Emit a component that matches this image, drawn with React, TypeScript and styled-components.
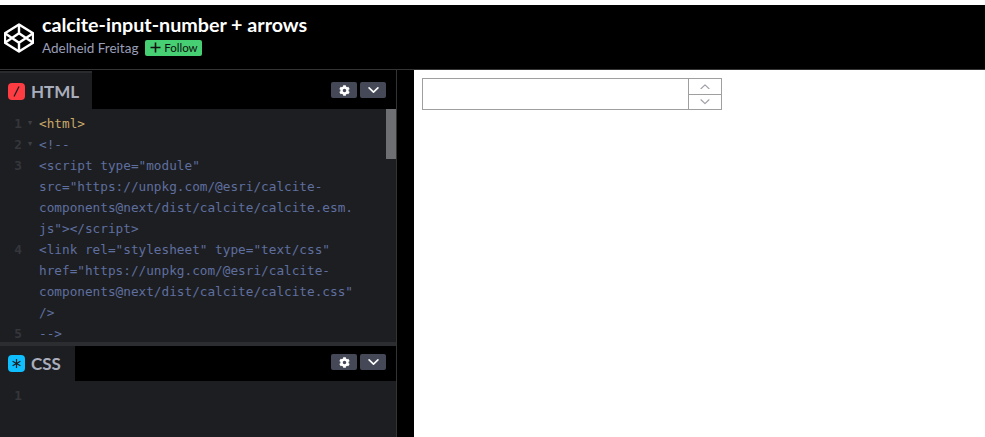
import styled, { createGlobalStyle } from "styled-components";
import { FaCog } from "react-icons/fa";

const GlobalStyle = createGlobalStyle`
  html, body {
    margin: 0;
    padding: 0;
    background: #fff;
  }
  * {
    box-sizing: border-box;
  }
`;

const Page = styled.div`
  width: 985px;
  height: 437px;
  padding-top: 5px;
  display: flex;
  flex-direction: column;
  overflow: hidden;
  font-family: Lato, "Liberation Sans", sans-serif;
`;

const Header = styled.header`
  height: 65px;
  flex: none;
  background: #000;
  border-bottom: 1px solid #343436;
  display: flex;
  align-items: center;
  padding: 0 0 5px 4px;
  gap: 8px;
`;

const Logo = styled.svg`
  width: 30px;
  height: 30px;
  margin-top: 6px;
  flex: none;
`;

const TitleBlock = styled.div`
  display: flex;
  flex-direction: column;
  gap: 4px;
`;

const Title = styled.h1`
  margin: 0;
  font-size: 19.7px;
  line-height: 22px;
  font-weight: 700;
  color: #fff;
`;

const Byline = styled.div`
  display: flex;
  align-items: center;
  gap: 7px;
  font-size: 13.5px;
  line-height: 16px;
  color: #9a9eb8;
`;

const FollowButton = styled.button`
  width: 57px;
  height: 16px;
  padding: 0;
  border: 0;
  border-radius: 2px;
  background: #47cf73;
  color: #111;
  font-family: inherit;
  font-size: 11.5px;
  display: flex;
  align-items: center;
  justify-content: center;
  gap: 3px;
`;

const Body = styled.main`
  flex: 1;
  display: flex;
  min-height: 0;
`;

const EditorColumn = styled.section`
  width: 397px;
  flex: none;
  display: flex;
  flex-direction: column;
  background: #000;
  border-right: 1px solid #343436;
`;

const Gutter = styled.div`
  width: 17px;
  flex: none;
  background: #000;
`;

const Preview = styled.section`
  flex: 1;
  background: #fff;
  padding: 8px;
`;

const Panel = styled.div<{ $height: number; $divider?: boolean }>`
  height: ${(p) => p.$height}px;
  flex: none;
  display: flex;
  flex-direction: column;
  position: relative;
  border-top: ${(p) => (p.$divider ? "4px solid #2c2d30" : "0")};
`;

const PanelBar = styled.div<{ $height: number }>`
  height: ${(p) => p.$height}px;
  flex: none;
  display: flex;
  align-items: stretch;
  justify-content: space-between;
  background: #000;
`;

const Tab = styled.div<{ $width: number; $topGap?: boolean }>`
  width: ${(p) => p.$width}px;
  margin-top: ${(p) => (p.$topGap ? "1px" : "0")};
  background: #1d1e22;
  border-top: ${(p) => (p.$topGap ? "2px solid #2a2b2f" : "0")};
  display: flex;
  align-items: center;
  gap: 6px;
  padding-left: 8px;
  font-size: 17px;
  font-weight: 700;
  color: #aaaebc;
`;

const TabIcon = styled.span<{ $color: string }>`
  width: 17px;
  height: 17px;
  border-radius: 4px;
  background: ${(p) => p.$color};
  display: flex;
  align-items: center;
  justify-content: center;
  color: #1d1e22;
  flex: none;
`;

const BarButtons = styled.div<{ $top: number }>`
  display: flex;
  align-items: flex-start;
  gap: 3px;
  padding: ${(p) => p.$top}px 10px 0 0;
`;

const BarButton = styled.button`
  width: 26px;
  height: 16px;
  padding: 0;
  border: 0;
  border-radius: 2px;
  background: #444857;
  color: #fff;
  display: flex;
  align-items: center;
  justify-content: center;
`;

const Code = styled.div`
  flex: 1;
  min-height: 0;
  overflow: hidden;
  background: #1d1e22;
  padding-top: 4px;
  font-family: "DejaVu Sans Mono", "Liberation Mono", monospace;
  font-size: 12.72px;
  line-height: 21px;
`;

const Line = styled.div`
  display: flex;
  height: 21px;
  white-space: pre;
`;

const LineNo = styled.span`
  width: 22px;
  flex: none;
  text-align: right;
  font-weight: 700;
  color: #34363b;
`;

const Fold = styled.span`
  width: 18px;
  flex: none;
  padding-left: 6px;
  font-size: 7px;
  color: #3d3f45;
`;

const Comment = styled.span`
  color: #5f6f9f;
  margin-left: -1px;
`;

const Tag = styled.span`
  color: #c9a968;
  margin-left: -1px;
`;

const Scrollbar = styled.div`
  position: absolute;
  top: 39px;
  right: 0;
  width: 10px;
  height: 50px;
  background: #6e6f72;
`;

const NumberInput = styled.div`
  width: 300px;
  height: 32px;
  border: 1px solid #9f9f9f;
  display: flex;
`;

const InputField = styled.input`
  flex: 1;
  min-width: 0;
  border: 0;
  outline: 0;
  background: #fff;
`;

const Steppers = styled.div`
  width: 33px;
  flex: none;
  border-left: 1px solid #9f9f9f;
  display: flex;
  flex-direction: column;
`;

const Stepper = styled.div<{ $first?: boolean }>`
  flex: 1;
  display: flex;
  align-items: center;
  justify-content: center;
  border-bottom: ${(p) => (p.$first ? "1px solid #9f9f9f" : "0")};
`;

const codeLines: [string, boolean, string, boolean?][] = [
  ["1", true, "<html>", true],
  ["2", true, "<!--"],
  ["3", false, '<script type="module"'],
  ["", false, 'src="https://unpkg.com/@esri/calcite-'],
  ["", false, "components@next/dist/calcite/calcite.esm."],
  ["", false, 'js"></script>'],
  ["4", false, '<link rel="stylesheet" type="text/css"'],
  ["", false, 'href="https://unpkg.com/@esri/calcite-'],
  ["", false, 'components@next/dist/calcite/calcite.css"'],
  ["", false, "/>"],
  ["5", false, "-->"],
];

function Chevron({ up, color, width, stroke }: { up?: boolean; color: string; width: number; stroke: number }) {
  const h = width * 0.55;
  return (
    <svg width={width} height={h} viewBox="0 0 10 5.5" fill="none">
      <path
        d={up ? "M1 4.7 5 .9l4 3.8" : "M1 .8 5 4.6 9 .8"}
        stroke={color}
        strokeWidth={stroke}
        strokeLinecap="round"
        strokeLinejoin="round"
      />
    </svg>
  );
}

function PanelButtons({ top }: { top: number }) {
  return (
    <BarButtons $top={top}>
      <BarButton>
        <FaCog size={11} />
      </BarButton>
      <BarButton>
        <Chevron color="#fff" width={11} stroke={1.5} />
      </BarButton>
    </BarButtons>
  );
}

export default function App() {
  return (
    <Page>
      <GlobalStyle />
      <Header>
        <Logo viewBox="0 0 32 32" fill="none" stroke="#fff" strokeWidth="2.6" strokeLinejoin="round">
          <path d="M16 1.5 31 11v10l-15 9.5L1 21V11z" />
          <path d="M16 1.5V11M16 21v9.5M1 11l15 10 15-10M1 21l15-10 15 10" />
        </Logo>
        <TitleBlock>
          <Title>calcite-input-number + arrows</Title>
          <Byline>
            Adelheid Freitag
            <FollowButton>
              <svg width="11" height="11" viewBox="0 0 11 11" stroke="#111" strokeWidth="1.6">
                <path d="M5.5 0.5v10M0.5 5.5h10" />
              </svg>
              Follow
            </FollowButton>
          </Byline>
        </TitleBlock>
      </Header>
      <Body>
        <EditorColumn>
          <Panel $height={272}>
            <PanelBar $height={39}>
              <Tab $width={92} $topGap>
                <TabIcon $color="#ff3c41">
                  <svg width="9" height="11" viewBox="0 0 9 11" stroke="#1d1e22" strokeWidth="1.2">
                    <path d="M7 .5 2 10.5" />
                  </svg>
                </TabIcon>
                HTML
              </Tab>
              <PanelButtons top={12} />
            </PanelBar>
            <Code>
              {codeLines.map(([no, fold, text, isTag], i) => (
                <Line key={i}>
                  <LineNo>{no}</LineNo>
                  <Fold>{fold ? "▼" : ""}</Fold>
                  {isTag ? <Tag>{text}</Tag> : <Comment>{text}</Comment>}
                </Line>
              ))}
            </Code>
            <Scrollbar />
          </Panel>
          <Panel $height={95} $divider>
            <PanelBar $height={35}>
              <Tab $width={75}>
                <TabIcon $color="#0ebeff">
                  <svg width="9" height="9" viewBox="0 0 9 9" stroke="#1d1e22" strokeWidth="1.2">
                    <path d="M4.5 0v9M.6 2.2l7.8 4.6M.6 6.8l7.8-4.6" />
                  </svg>
                </TabIcon>
                CSS
              </Tab>
              <PanelButtons top={8} />
            </PanelBar>
            <Code>
              <Line>
                <LineNo>1</LineNo>
              </Line>
            </Code>
          </Panel>
        </EditorColumn>
        <Gutter />
        <Preview>
          <NumberInput>
            <InputField />
            <Steppers>
              <Stepper $first>
                <Chevron up color="#a0a0a8" width={10} stroke={1.2} />
              </Stepper>
              <Stepper>
                <Chevron color="#a0a0a8" width={10} stroke={1.2} />
              </Stepper>
            </Steppers>
          </NumberInput>
        </Preview>
      </Body>
    </Page>
  );
}
